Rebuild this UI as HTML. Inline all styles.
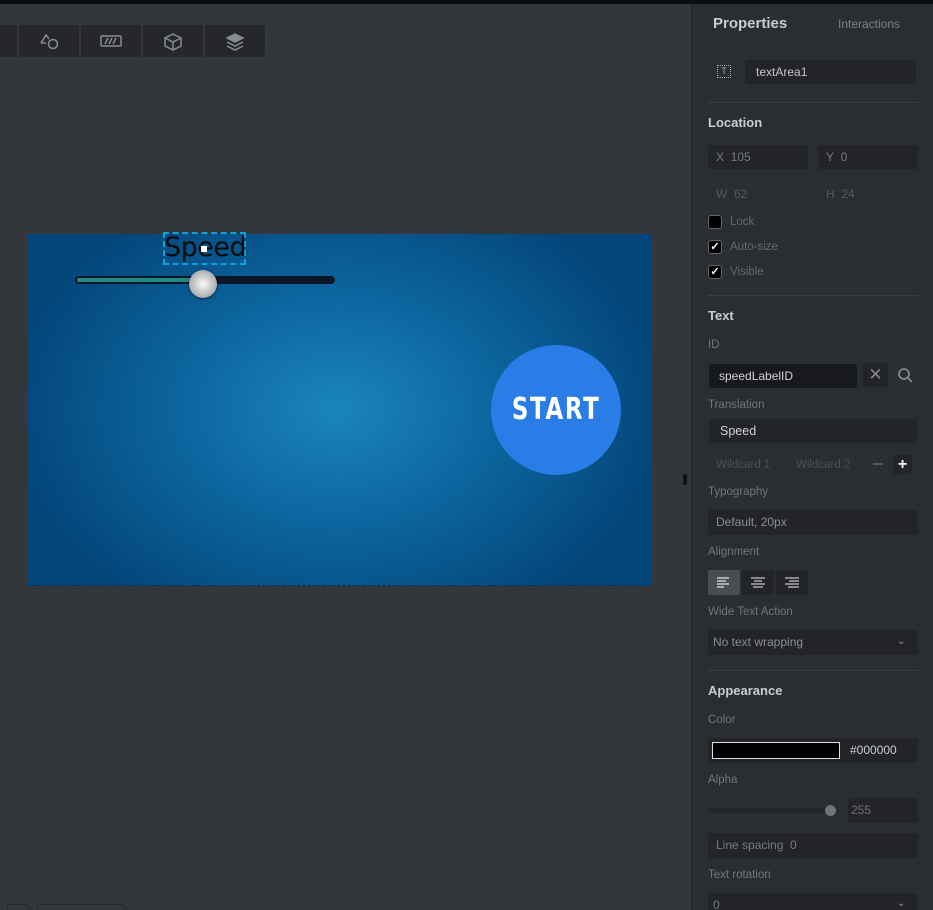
<!DOCTYPE html><html><head><style>
*{margin:0;padding:0;box-sizing:border-box}
html,body{width:933px;height:910px;overflow:hidden}
body{background:#33363b;font-family:"Liberation Sans",sans-serif;position:relative}
.a{position:absolute}
.topbar{left:0;top:0;width:933px;height:4px;background:#0c0d0e}
.tb{top:25px;height:32px;background:#25272b}
.panel{left:691px;top:4px;width:242px;height:906px;background:#2a2d31;border-left:2px solid #25282b}
.f{background:#222428;border-radius:2px;color:#6b6f75;font-size:12px;line-height:24px;padding-left:8px}
.lbl{color:#72767c;font-size:11.5px}
.h{color:#c9ccd0;font-size:13px;font-weight:bold}
.sep{height:1px;background:#3a3d42;left:708px;width:210px}
.cb{width:14px;height:14px;border:1px solid #666;border-radius:3px;background:#000}
.ck{color:#fff;font-size:11px;line-height:12px;text-align:center;font-weight:bold}
</style></head><body>
<div class="a topbar"></div>
<div class="a tb" style="left:0;width:17px"></div>
<div class="a tb" style="left:19px;width:60px"></div>
<div class="a tb" style="left:81px;width:60px"></div>
<div class="a tb" style="left:143px;width:60px"></div>
<div class="a tb" style="left:205px;width:60px;border-radius:0 3px 3px 0"></div>
<svg class="a" style="left:0;top:25px" width="270" height="32" fill="none" stroke="#888c92" stroke-width="1.5">
<path d="M41 18 L46 10 L49 14 M41 18 H46"/><circle cx="53" cy="19" r="4.5"/>
<rect x="101" y="11" width="20" height="10" rx="1"/><path d="M105 19 L108 13 M109 19 L112 13 M113 19 L116 13"/>
<path d="M173 9 L181 13 V21 L173 25 L165 21 V13 Z M165 13 L173 17 L181 13 M173 17 V25"/>
<path d="M235 9 L243 13 L235 17 L227 13 Z" fill="#888c92"/><path d="M227 17 L235 21 L243 17 M227 21 L235 25 L243 21"/>
</svg>
<div class="a" style="left:27px;top:234px;width:624px;height:352px;background:radial-gradient(ellipse 330px 240px at 310px 175px,#1a85b8 0%,#0d67a0 45%,#03457a 100%);border-bottom:1px dashed #0a2f50"></div>
<div class="a" style="left:75px;top:276px;width:260px;height:8px;border-radius:4px;background:#0c1626"></div>
<div class="a" style="left:77px;top:278px;width:126px;height:4px;border-radius:2px;background:#1e8a84"></div>
<div class="a" style="left:189px;top:270px;width:28px;height:28px;border-radius:50%;background:radial-gradient(circle at 50% 50%,#fafafa 0%,#c8c8c8 45%,#8c8c8c 100%);box-shadow:0 1px 3px rgba(0,0,0,.5)"></div>
<div class="a" style="left:163px;top:232px;width:83px;height:33px;border:2px dashed #0aa3e0"></div>
<div class="a" style="left:164px;top:232px;font-family:'DejaVu Sans',sans-serif;font-size:27px;letter-spacing:-0.5px;color:#0a0a0a">Speed</div>
<div class="a" style="left:201px;top:246px;width:6px;height:6px;background:#fff"></div>
<div class="a" style="left:491px;top:345px;width:130px;height:130px;border-radius:50%;background:#2a7de6"></div>
<div class="a" style="left:491px;top:345px;width:130px;line-height:130px;text-align:center;color:#fff;font-size:30px;font-weight:bold;font-family:'DejaVu Sans Condensed','DejaVu Sans',sans-serif;letter-spacing:2px"><span style="display:inline-block;transform:scaleX(.85)">START</span></div>
<div class="a" style="left:683px;top:474px;width:4px;height:11px;border-radius:2px;background:#111"></div>
<div class="a" style="left:7px;top:904px;width:22px;height:10px;border:1px solid #25272b;border-radius:3px"></div>
<div class="a" style="left:37px;top:904px;width:88px;height:10px;border:1px solid #25272b;border-radius:3px"></div>
<div class="a panel"></div>
<div class="a h" style="left:713px;top:15px;font-size:15px">Properties</div>
<div class="a lbl" style="left:838px;top:17px;font-size:12px;color:#7d8187">Interactions</div>
<div class="a" style="left:717px;top:65px;width:14px;height:13px;border:1px dotted #aaa;color:#aaa;font-size:9px;text-align:center;line-height:11px">T</div>
<div class="a f" style="left:745px;top:60px;width:171px;color:#c3c6ca;padding-left:11px">textArea1</div>
<div class="a sep" style="top:102px"></div>
<div class="a h" style="left:708px;top:115px">Location</div>
<div class="a f" style="left:708px;top:145px;width:100px;color:#777b80">X&nbsp;&nbsp;105</div>
<div class="a f" style="left:818px;top:145px;width:100px;color:#777b80">Y&nbsp;&nbsp;0</div>
<div class="a lbl" style="left:716px;top:187px;color:#55595e;font-size:12px">W&nbsp;&nbsp;62</div>
<div class="a lbl" style="left:826px;top:187px;color:#55595e;font-size:12px">H&nbsp;&nbsp;24</div>
<div class="a cb" style="left:708px;top:215px"></div><div class="a lbl" style="left:730px;top:216px;color:#666a70">Lock</div>
<div class="a cb ck" style="left:708px;top:240px">✓</div><div class="a lbl" style="left:730px;top:241px;color:#666a70">Auto-size</div>
<div class="a cb ck" style="left:708px;top:265px">✓</div><div class="a lbl" style="left:730px;top:266px;color:#666a70">Visible</div>
<div class="a sep" style="top:295px"></div>
<div class="a h" style="left:708px;top:308px">Text</div>
<div class="a lbl" style="left:708px;top:339px">ID</div>
<div class="a f" style="left:709px;top:364px;width:148px;background:#18191c;color:#d0d3d6;padding-left:10px">speedLabelID</div>
<div class="a f" style="left:863px;top:363px;width:25px;padding:0;text-align:center;font-size:17px;color:#888">✕</div>
<div class="a f" style="left:893px;top:363px;width:25px;padding:0"></div>
<svg class="a" style="left:893px;top:363px" width="25" height="25" fill="none" stroke="#888" stroke-width="1.7"><circle cx="11" cy="11" r="5"/><path d="M15 15 L19 19"/></svg>
<div class="a lbl" style="left:708px;top:399px">Translation</div>
<div class="a f" style="left:709px;top:419px;width:208px;color:#d0d3d6;font-size:12.5px;padding-left:11px">Speed</div>
<div class="a lbl" style="left:716px;top:459px;color:#4c5055">Wildcard 1</div>
<div class="a lbl" style="left:796px;top:459px;color:#4c5055">Wildcard 2</div>
<div class="a" style="left:873px;top:463px;width:10px;height:2px;background:#555"></div>
<div class="a f" style="left:893px;top:455px;width:19px;height:19px;padding:0;color:#fff;font-weight:bold;font-size:16px;line-height:19px;text-align:center">+</div>
<div class="a lbl" style="left:708px;top:486px">Typography</div>
<div class="a f" style="left:708px;top:510px;width:210px;line-height:25px;color:#8a8e93">Default, 20px</div>
<div class="a lbl" style="left:708px;top:546px">Alignment</div>
<div class="a f" style="left:708px;top:570px;width:32px;height:25px;background:#4a4e54;padding:0"></div>
<div class="a f" style="left:742px;top:570px;width:32px;height:25px;padding:0"></div>
<div class="a f" style="left:776px;top:570px;width:32px;height:25px;padding:0"></div>
<svg class="a" style="left:708px;top:570px" width="100" height="25" stroke="#c9ccd0" stroke-width="1.4">
<path d="M9 8H21M9 11H18M9 14H21M9 17H16"/><path d="M43 8H57M46 11H54M43 14H57M45 17H55" stroke="#aaa"/><path d="M77 8H91M81 11H91M77 14H91M80 17H91" stroke="#aaa"/></svg>
<div class="a lbl" style="left:708px;top:606px">Wide Text Action</div>
<div class="a f" style="left:708px;top:630px;width:210px;line-height:25px;color:#8a8e93;padding-left:5px">No text wrapping</div>
<div class="a" style="left:897px;top:636px;color:#999;font-size:10px">⌄</div>
<div class="a sep" style="top:670px"></div>
<div class="a h" style="left:708px;top:683px">Appearance</div>
<div class="a lbl" style="left:708px;top:714px">Color</div>
<div class="a f" style="left:708px;top:738px;width:210px;line-height:25px;padding-left:142px;color:#c9ccd0">#000000</div>
<div class="a" style="left:712px;top:742px;width:128px;height:17px;background:#000;border:1px solid #ddd"></div>
<div class="a lbl" style="left:708px;top:774px">Alpha</div>
<div class="a" style="left:708px;top:808px;width:120px;height:5px;background:#222428;border-radius:3px"></div>
<div class="a" style="left:825px;top:805px;width:11px;height:11px;background:#6f737a;border-radius:50%"></div>
<div class="a f" style="left:848px;top:798px;width:70px;line-height:25px;color:#6b6f75;padding-left:3px">255</div>
<div class="a f" style="left:708px;top:833px;width:210px;line-height:25px;color:#777b80">Line spacing&nbsp;&nbsp;0</div>
<div class="a lbl" style="left:708px;top:869px">Text rotation</div>
<div class="a f" style="left:708px;top:893px;width:210px;line-height:25px;color:#777b80;padding-left:5px">0</div>
<div class="a" style="left:897px;top:898px;color:#999;font-size:10px">⌄</div>
</body></html>
